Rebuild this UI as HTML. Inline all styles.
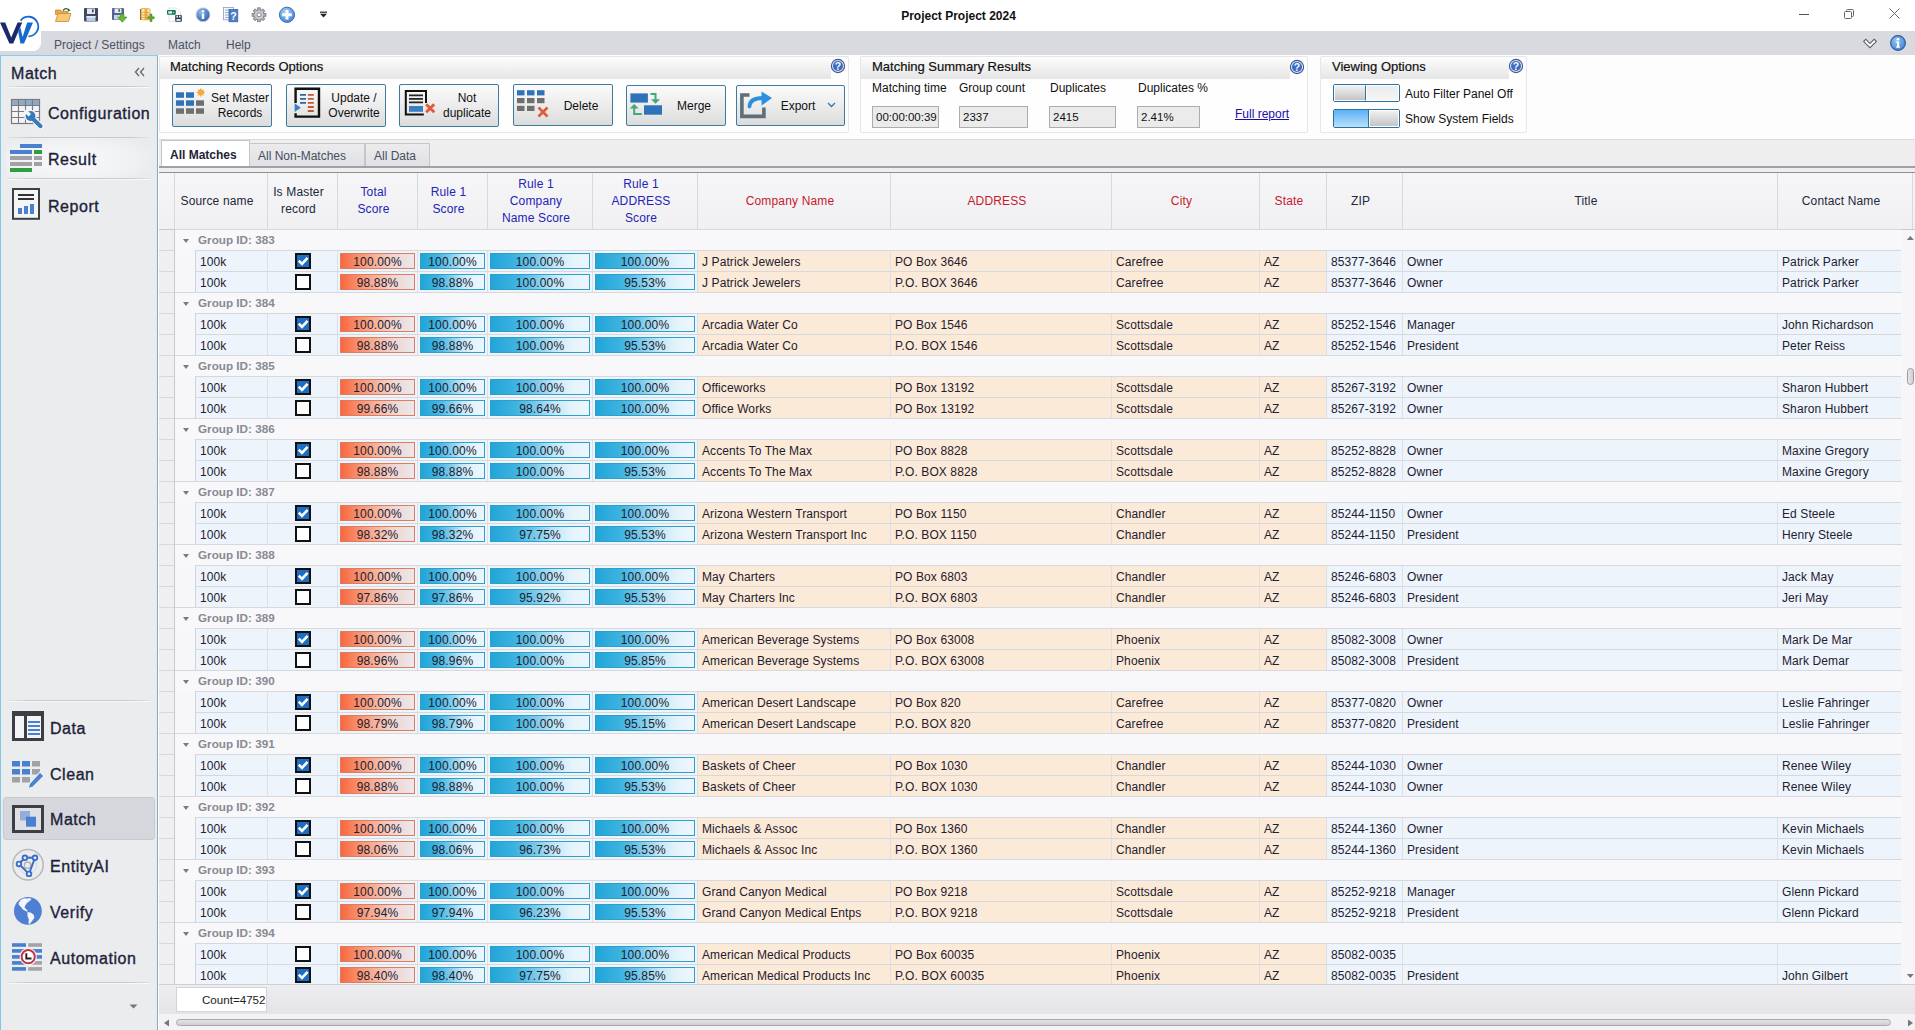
<!DOCTYPE html>
<html><head><meta charset="utf-8"><title>Project Project 2024</title>
<style>*{margin:0;padding:0;box-sizing:border-box}
html,body{width:1915px;height:1030px;overflow:hidden;background:#fff;font-family:"Liberation Sans",sans-serif;color:#1e1e2a}
.a{position:absolute}
#title{left:0;top:0;width:1915px;height:31px;background:#fff}
#ttext{left:0;width:1915px;top:9px;text-align:center;font-size:12px;font-weight:bold;color:#111;padding-left:2px}
#menubar{left:0;top:31px;width:1915px;height:24px;background:#d9dadf}
.menu{top:38px;font-size:12px;color:#4b5262}
#logo{left:0;top:0;width:41px;height:51px;background:#fff;border-bottom-right-radius:8px}
#sidebar{left:0;top:55px;width:158px;height:975px;background:#ebecee;border-left:1px solid #96bed8;border-right:1px solid #9ba7b7;border-top:1px solid #a3c3da;box-shadow:0 -1px 0 #c6def2,inset 1px 0 #d4f4fc,inset -1px 0 #d2f0fc,inset 0 1px #d4f4fc}
.sep{height:1px;background:linear-gradient(90deg,rgba(200,201,205,0.3),#c8c9cd 15%,#c8c9cd 85%,rgba(200,201,205,0.3));box-shadow:0 1px 0 #f8f8f8}
.nav{font-size:16px;color:#1d1f3a;letter-spacing:0.55px;-webkit-text-stroke:0.35px #1d1f3a}
#ribbon{left:159px;top:55px;width:1756px;height:85px;background:#fdfdfd}
.panel{top:56px;height:77px;border:1px solid #e6e7e9;border-radius:2px;background:#fefefe}
.phead{left:0;top:0;height:22px;background:linear-gradient(#fdfdfd,#e5e5e5);font-size:13px;color:#111;padding:2px 0 0 10px;-webkit-text-stroke:0.2px #111}
.btn{top:84px;height:43px;border:1px solid #3f7ba0;border-radius:2px;background:linear-gradient(#fbfbfb,#e9e9e9 60%,#dcdcdc);font-size:12px;color:#111;line-height:15px;text-align:center}
.lbl{font-size:12px;color:#111}
.box{top:106px;height:22px;border:1px solid #adadad;background:#ebebeb;font-size:11.5px;color:#111;padding:4px 0 0 3px}
#band{left:159px;top:139px;width:1756px;height:34px;background:#eeeeee;border-top:1px solid #dadada}
.tab{top:143px;height:24px;border:1px solid #c6c6c6;border-bottom:none;background:linear-gradient(#ececee,#dfe0e4);font-size:12px;color:#474d5c;padding:5px 0 0 8px}
#tabline{left:159px;top:166px;width:1756px;height:2px;background:#a09fab}
#grid{left:159px;top:172px;width:1756px;height:812px;background:#f7f7f9;border-top:1px solid #8f8f8f;overflow:hidden}
#hdr{left:0;top:0;width:1756px;height:57px;background:linear-gradient(#f6f6f8,#f0f0f3);border-bottom:1px solid #c8c9cc}
.hc{top:0;height:56px;border-left:1px solid #d8d9dc;font-size:12px;line-height:17px;text-align:center;display:flex;align-items:center;justify-content:center;color:#232838;padding-right:8px;letter-spacing:0.15px}
.hb{color:#2323b4}
.hr{color:#c51a2c}
#indcol{left:0;top:57px;width:16px;height:760px;background:#efeff1;border-right:1px solid #c9c9cc}
.grp{position:absolute;left:175px;width:1727px;height:22px;border-top:1px solid #d6d8dc;background:#f8f8fa}
.garr{position:absolute;left:8px;top:9px;width:0;height:0;border-left:3.5px solid transparent;border-right:3.5px solid transparent;border-top:4px solid #7b7b7b}
.gtxt{position:absolute;left:23px;top:3px;font-size:11.7px;font-weight:bold;color:#878a93;line-height:13px}
.ind{position:absolute;left:159px;width:15px;height:43px;border-top:1px solid #d6d8dc;border-bottom:1px solid #d6d8dc;background:linear-gradient(transparent 20px,#d6d8dc 20px,#d6d8dc 21px,transparent 21px)}
.row{position:absolute;left:195px;width:1706px;height:22px;border-top:1px solid #d6d8dc;border-bottom:1px solid #d6d8dc}
.c{position:absolute;top:0;height:20px;font-size:12px;line-height:20px;padding-top:1px;padding-left:4px;letter-spacing:0.1px;white-space:nowrap;border-left:1px solid #dcdfe4;color:#1e2030}
.blue{background:#eef4fb}
.pe{background:#fbead7}
.src{background:#eef4fb;border-left:1px solid #d0d3d8}
.cb{position:absolute;left:27px;top:2px;width:16px;height:16px;border:2px solid #111;background:#fff}
.cb.on{background:#1b6ec2}
.bar{position:absolute;left:2px;top:2px;right:2px;height:16px;line-height:16px;letter-spacing:0.15px;text-align:center;font-size:12px;color:#1d2030;padding-left:0}
.bar.or{border:1px solid #de7d5e;background:linear-gradient(90deg,#f8673f,#f88a66 20%,#f6b39c 48%,#efd5d1 70%,#ece7eb)}
.bar.bl{border:1px solid #2c9fcb;background:linear-gradient(90deg,#21a5d8,#3db3e0 25%,#78c9ea 45%,#c3e7f5 65%,#e4f3fb 82%,#edf5fc)}
#footer{left:159px;top:984px;width:1756px;height:30px;background:linear-gradient(#ededef,#e4e4e7);border-top:1px solid #cdd0d5}
.bt{text-align:center;font-size:12px;line-height:15px;color:#111}
.tog{width:67px;height:18px;border:1px solid #2f7199;border-radius:2px;overflow:hidden;background:#eee}
.cb svg{position:absolute;left:0;top:0}
</style></head>
<body>
<div id="title" class="a"></div>
<div id="ttext" class="a">Project Project 2024</div>
<div id="menubar" class="a"></div>
<div id="logo" class="a"></div>
<svg class="a" style="left:0;top:0" width="42" height="50" viewBox="0 0 42 50">
 <polygon points="0,22.5 5.2,22.5 11.2,37.5 17.6,22.5 22.2,22.5 13.2,43.5 9.4,43.5" fill="#1c2a6b"/>
 <polygon points="18.2,31.5 20.4,27.2 22.6,37 27.2,22.5 33,22.5 24,43.5 20.4,43.5" fill="#1769d2"/>
 <path d="M20.6,20.6 A9.8,9.8 0 1 1 28.5,36.3" fill="none" stroke="#1769d2" stroke-width="1.8"/>
</svg>
<!-- toolbar icons -->
<svg class="a" style="left:50px;top:3px" width="290" height="24" viewBox="50 3 290 24">
 <!-- open folder -->
 <path d="M55.5,10 h5 l1.5,1.5 h6 v3 h-12.5z" fill="#e7a94c" stroke="#c98a30" stroke-width="0.8"/>
 <path d="M55.5,21.5 l2.5,-8 h13 l-2.5,8z" fill="#f6c878" stroke="#c98a30" stroke-width="0.8"/>
 <path d="M63,10.5 q3,-3.5 6,-0.5" fill="none" stroke="#1e6a2a" stroke-width="1.3"/>
 <path d="M68,8.6 l2.6,1.8 l-2.8,1.2z" fill="#1e6a2a"/>
 <!-- save -->
 <rect x="84" y="8" width="14" height="13.6" rx="1" fill="#3d4a5f"/>
 <rect x="87" y="8.5" width="8" height="5.5" fill="#e8e8f0"/>
 <rect x="92" y="9.3" width="1.6" height="3" fill="#3d4a5f"/>
 <rect x="86.5" y="16" width="9" height="5" fill="#b9cce6"/>
 <rect x="86.5" y="16" width="9" height="1.5" fill="#e6edf7"/>
 <!-- save with arrow -->
 <rect x="112" y="8" width="12" height="12" rx="1" fill="#55648a"/>
 <rect x="114.5" y="8.5" width="7" height="4.5" fill="#e8e8f0"/>
 <rect x="118.5" y="9.2" width="1.4" height="2.6" fill="#3d4a5f"/>
 <rect x="114" y="15" width="7" height="4.5" fill="#c9d6ea"/>
 <path d="M120.5,14 h3.5 v3 h3 l-4.7,5.3 l-4.7,-5.3 h3z" fill="#6fb733" stroke="#3f8a1a" stroke-width="0.6"/>
 <!-- database -->
 <rect x="140.5" y="8.5" width="9.6" height="11.4" rx="1.5" fill="#fbe7a8" stroke="#e0a94e" stroke-width="0.8"/>
 <rect x="140" y="9" width="1.3" height="11" fill="#9a6a2a"/>
 <rect x="144.5" y="9" width="3" height="11" fill="#e8a63c" opacity="0.85"/>
 <path d="M141.5,12.5 h8 M141.5,15 h8 M141.5,17.5 h8" stroke="#d9983a" stroke-width="0.7"/>
 <path d="M150,14 h2 v2.8 h2.2 v2 h-2.2 v2.8 h-2 v-2.8 h-2.2 v-2 h2.2z" fill="#6aa532" stroke="#3f7a1a" stroke-width="0.5"/>
 <!-- table lock -->
 <path d="M169,8 h7.5 l4,4 v9.8 h-11.5z" fill="#fbfcfe" stroke="#c9d0da" stroke-width="0.6"/>
 <rect x="167" y="10.1" width="8.8" height="4.7" rx="1" fill="#137a50"/>
 <rect x="168.3" y="11.2" width="3.8" height="2.4" fill="#dff5ea"/>
 <rect x="173.2" y="12" width="1" height="1" fill="#dff5ea"/>
 <rect x="175.2" y="15" width="6.6" height="6.8" rx="0.8" fill="#2f3a4c"/>
 <rect x="176.4" y="15.6" width="1.6" height="2" fill="#e6ebf5"/><rect x="179" y="15.6" width="1.6" height="2" fill="#e6ebf5"/>
 <rect x="176.4" y="19" width="4.2" height="2" fill="#cfe0f5"/>
 <!-- info -->
 <defs><radialGradient id="tg1" cx="0.35" cy="0.3" r="0.75"><stop offset="0" stop-color="#8db8ec"/><stop offset="1" stop-color="#2f62b2"/></radialGradient><radialGradient id="tg2" cx="0.4" cy="0.3" r="0.75"><stop offset="0" stop-color="#a6cdf5"/><stop offset="1" stop-color="#3f82d2"/></radialGradient></defs>
 <circle cx="203" cy="14.8" r="6.9" fill="url(#tg1)" stroke="#b4c8e6" stroke-width="0.9"/>
 <circle cx="203" cy="11.3" r="1.3" fill="#fff"/>
 <rect x="201.8" y="13.5" width="2.4" height="5.5" fill="#fff"/>
 <!-- help doc -->
 <rect x="223.5" y="7.5" width="10" height="12.3" fill="#f6f7fa" stroke="#8ea0bc" stroke-width="0.8"/>
 <path d="M225,10 h6 M225,12.5 h6 M225,15 h6 M225,17.5 h6" stroke="#8ea0bc" stroke-width="0.8"/>
 <rect x="229" y="9.5" width="8.8" height="12.3" fill="#4a7fc6" stroke="#2f60a8" stroke-width="0.7"/>
 <text x="233.4" y="19.6" font-family="Liberation Sans" font-size="10.5" font-weight="bold" fill="#fff" text-anchor="middle">?</text>
 <!-- gear -->
 <g transform="translate(259,14.8)">
  <circle r="5.2" fill="#a4a7ae" stroke="#6e7179" stroke-width="0.8"/>
  <g fill="#a4a7ae" stroke="#6e7179" stroke-width="0.6">
   <rect x="-1.5" y="-7" width="3" height="3"/><rect x="-1.5" y="4" width="3" height="3"/>
   <rect x="-7" y="-1.5" width="3" height="3"/><rect x="4" y="-1.5" width="3" height="3"/>
   <rect x="-1.5" y="-7" width="3" height="3" transform="rotate(45)"/><rect x="-1.5" y="4" width="3" height="3" transform="rotate(45)"/>
   <rect x="-7" y="-1.5" width="3" height="3" transform="rotate(45)"/><rect x="4" y="-1.5" width="3" height="3" transform="rotate(45)"/>
  </g>
  <circle r="4.6" fill="#c9cbd0"/>
  <circle r="2" fill="#fff" stroke="#6e7179" stroke-width="0.8"/>
 </g>
 <!-- plus -->
 <circle cx="287" cy="14.8" r="7.6" fill="url(#tg2)" stroke="#3a6fb8" stroke-width="1"/>
 <path d="M285.5,10 h3 v3.3 h3.3 v3 h-3.3 v3.3 h-3 v-3.3 h-3.3 v-3 h3.3z" fill="#fff"/>
 <!-- dropdown -->
 <rect x="320" y="11.6" width="7" height="1.2" fill="#222"/>
 <path d="M320,13.8 h7 l-3.5,3.8z" fill="#222"/>
</svg>
<div class="a menu" style="left:54px">Project / Settings</div>
<div class="a menu" style="left:168px">Match</div>
<div class="a menu" style="left:226px">Help</div>
<!-- window controls -->
<div class="a" style="left:1799px;top:14px;width:10px;height:1px;background:#555"></div>
<svg class="a" style="left:1843px;top:8px" width="12" height="12" viewBox="0 0 12 12"><rect x="1.5" y="3.5" width="7" height="7" rx="1" fill="none" stroke="#666" stroke-width="1"/><path d="M3.5,3.5 v-1 a1,1 0 0 1 1,-1 h5 a1,1 0 0 1 1,1 v5 a1,1 0 0 1 -1,1 h-1" fill="none" stroke="#666" stroke-width="1"/></svg>
<svg class="a" style="left:1889px;top:8px" width="12" height="12" viewBox="0 0 12 12"><path d="M0.5,0.5 L10.5,10.5 M10.5,0.5 L0.5,10.5" stroke="#666" stroke-width="1"/></svg>
<svg class="a" style="left:1863px;top:38px" width="14" height="12" viewBox="0 0 14 12"><path d="M2.8,3.4 L7,7.6 L11.2,3.4" fill="none" stroke="#5a5a5e" stroke-width="4" stroke-linecap="square"/><path d="M2.8,3.4 L7,7.6 L11.2,3.4" fill="none" stroke="#fdfdfd" stroke-width="2" stroke-linecap="square"/></svg>
<svg class="a" style="left:1889px;top:34px" width="18" height="18" viewBox="0 0 18 18"><defs><radialGradient id="ig" cx="0.4" cy="0.35" r="0.7"><stop offset="0" stop-color="#9cc8f4"/><stop offset="1" stop-color="#3f7fcf"/></radialGradient></defs><circle cx="9" cy="9" r="7.4" fill="url(#ig)" stroke="#2a5c9e" stroke-width="1.1"/><circle cx="9" cy="5.3" r="1.3" fill="#fff"/><path d="M7.3,7.5 h2.8 v5 h1 v1.3 h-4 v-1.3 h1 v-3.7 h-0.8z" fill="#fff"/></svg>

<div id="sidebar" class="a"></div>
<div class="a nav" style="left:11px;top:65px;font-size:16px">Match</div>
<svg class="a" style="left:134px;top:67px" width="12" height="10" viewBox="0 0 12 10"><path d="M5,1 L1.5,5 L5,9 M10,1 L6.5,5 L10,9" fill="none" stroke="#666" stroke-width="1.3"/></svg>
<div class="a sep" style="left:8px;top:86px;width:142px"></div>
<svg class="a" style="left:10px;top:98px" width="34" height="32" viewBox="10 98 34 32">
 <rect x="11.5" y="99.5" width="28" height="24" fill="#f4f4f6" stroke="#7a7a7e" stroke-width="1.2"/>
 <rect x="12" y="100" width="27" height="5.5" fill="#8fa9c6"/>
 <path d="M18.5,99.5 v24 M25.5,99.5 v24 M32.5,99.5 v24 M11.5,105.5 h28 M11.5,111.5 h28 M11.5,117.5 h28" stroke="#7a7a7e" stroke-width="1.1" fill="none"/>
 <path d="M32,118 L40.6,126.2" stroke="#f4f8fc" stroke-width="6.4" stroke-linecap="round"/>
 <circle cx="30.5" cy="116" r="6.3" fill="#f4f8fc"/>
 <circle cx="30.5" cy="116" r="4.9" fill="#3a78bc"/>
 <path d="M32,118 L40.6,126.2" stroke="#3a78bc" stroke-width="4" stroke-linecap="round"/>
 <rect x="-1.7" y="-3.4" width="3.4" height="6.8" fill="#f4f8fc" transform="translate(27.4,112.9) rotate(-45)"/>
</svg>
<div class="a nav" style="left:48px;top:105px">Configuration</div>
<div class="a sep" style="left:8px;top:137px;width:142px"></div>

<div class="a" style="left:6px;top:138px;width:146px;height:40px;background:radial-gradient(ellipse 60% 70% at 45% 55%,#fafafb,#f0f1f3 70%,#eaebee)"></div>
<svg class="a" style="left:10px;top:143px" width="34" height="30" viewBox="10 143 34 30">
 <rect x="20" y="144" width="22" height="4" fill="#4a80d0"/>
 <rect x="10" y="150" width="22" height="4" fill="#4a80d0"/><rect x="34" y="150" width="8" height="4" fill="#2f9e3f"/>
 <rect x="10" y="156" width="22" height="4" fill="#a2a2a6"/><rect x="34" y="156" width="8" height="4" fill="#a2a2a6"/>
 <rect x="10" y="162" width="22" height="4" fill="#a2a2a6"/><rect x="34" y="162" width="8" height="4" fill="#a2a2a6"/>
 <rect x="10" y="168" width="22" height="4" fill="#2f9e3f"/>
</svg>
<div class="a nav" style="left:48px;top:151px">Result</div>
<div class="a sep" style="left:8px;top:178px;width:142px"></div>
<svg class="a" style="left:10px;top:186px" width="34" height="36" viewBox="10 186 34 36">
 <rect x="13" y="189" width="26" height="29.8" fill="#f4f5f7" stroke="#3e3e44" stroke-width="2"/>
 <rect x="18" y="194" width="16" height="2" fill="#333"/><rect x="18" y="198" width="16" height="2" fill="#333"/>
 <rect x="18" y="208" width="4" height="6" fill="#4a80d0"/><rect x="24" y="206" width="4" height="8" fill="#4a80d0"/><rect x="30" y="204" width="4" height="10" fill="#4a80d0"/>
</svg>
<div class="a nav" style="left:48px;top:198px">Report</div>
<div class="a sep" style="left:8px;top:700px;width:142px"></div>
<svg class="a" style="left:10px;top:709px" width="36" height="34" viewBox="10 709 36 34">
 <rect x="13.5" y="712.5" width="29" height="27" fill="#f4f4f6" stroke="#3d3d45" stroke-width="3"/>
 <rect x="12" y="711" width="32" height="5" fill="#3d3d45"/>
 <rect x="24" y="712" width="3" height="28" fill="#3d3d45"/>
 <rect x="28" y="721" width="12" height="2" fill="#4a80d0"/><rect x="28" y="725" width="12" height="2" fill="#4a80d0"/><rect x="28" y="729" width="12" height="2" fill="#4a80d0"/><rect x="28" y="733" width="12" height="2" fill="#4a80d0"/>
</svg>
<div class="a nav" style="left:50px;top:720px">Data</div>
<svg class="a" style="left:10px;top:759px" width="36" height="32" viewBox="10 759 36 32">
 <rect x="12" y="761" width="8" height="5.5" fill="#4a80d0"/><rect x="22" y="761" width="8" height="5.5" fill="#4a80d0"/><rect x="32" y="761" width="8" height="5.5" fill="#a2a2a6"/>
 <rect x="12" y="769" width="8" height="5.5" fill="#4a80d0"/><rect x="22" y="769" width="8" height="5.5" fill="#4a80d0"/><rect x="32" y="769" width="8" height="5.5" fill="#a2a2a6"/>
 <rect x="12" y="777" width="8" height="5.5" fill="#a2a2a6"/><rect x="22" y="777" width="8" height="5.5" fill="#a2a2a6"/>
 <path d="M40,772 l4,4 l-11,11 l-5,1.5 l1.5,-5z" fill="#4a80d0" stroke="#eceef0" stroke-width="1.2"/>
</svg>
<div class="a nav" style="left:50px;top:766px">Clean</div>
<div class="a" style="left:3px;top:797px;width:152px;height:43px;background:#d6d7dc;border:1px solid #c9cacf;border-radius:3px"></div>
<svg class="a" style="left:10px;top:803px" width="36" height="32" viewBox="10 803 36 32">
 <rect x="13.5" y="806.5" width="29" height="25" fill="#dfe0e4" stroke="#3d3d45" stroke-width="3"/>
 <rect x="20" y="811" width="10" height="9.5" fill="#93acd8"/>
 <rect x="26" y="816.7" width="10" height="10" fill="#4a80d0"/>
</svg>
<div class="a nav" style="left:50px;top:811px">Match</div>
<svg class="a" style="left:10px;top:847px" width="36" height="36" viewBox="10 847 36 36">
 <circle cx="28" cy="864.7" r="15.2" fill="none" stroke="#b6b8bc" stroke-width="1.5"/>
 <circle cx="27.8" cy="865" r="9" fill="none" stroke="#d8d9dc" stroke-width="1"/>
 <circle cx="27.6" cy="865.2" r="3.2" fill="none" stroke="#b0b1b5" stroke-width="1.4"/>
 <path d="M18.9,864 L24.9,857.8 L35,857.8 L29,873.9 Z" fill="none" stroke="#3a6cc8" stroke-width="1.9" stroke-linejoin="round"/>
 <g fill="#e6f2fc" stroke="#3a6cc8" stroke-width="1.8"><circle cx="18.9" cy="864" r="2.3"/><circle cx="24.9" cy="857.8" r="2.3"/><circle cx="35" cy="857.8" r="2.3"/><circle cx="29" cy="873.9" r="2.3"/></g>
</svg>
<div class="a nav" style="left:50px;top:858px">EntityAI</div>
<svg class="a" style="left:12px;top:895px" width="32" height="32" viewBox="12 895 32 32">
 <circle cx="27.9" cy="910.9" r="13.9" fill="#4f7fd2"/>
 <path d="M18.4,903.8 L20.5,900 L24,898.2 L27.5,898.5 L30,898 L31.5,899.5 L29,901.5 L27,903 L25.5,905 L24.5,907.5 L26.5,909.5 L28,911.2 L26.5,911.5 L23,909.5 L21,907 L19.5,905.5 Z" fill="#f3f5fa"/>
 <path d="M27.5,912 L30.5,912.5 L33.5,914.5 L34.5,917.5 L32.5,920.5 L30.5,923 L29.5,924.5 L28.5,923 L28.8,919.5 L27.5,916 Z" fill="#f3f5fa"/>
</svg>
<div class="a nav" style="left:50px;top:904px">Verify</div>
<svg class="a" style="left:10px;top:941px" width="36" height="32" viewBox="10 941 36 32">
 <rect x="12" y="943.2" width="14" height="3.6" fill="#4a7fcf"/><rect x="28.2" y="943.2" width="13.8" height="3.6" fill="#a4a4a8"/>
 <rect x="12" y="949.1" width="14" height="3.6" fill="#4a7fcf"/><rect x="28.2" y="949.1" width="13.8" height="3.6" fill="#4a7fcf"/>
 <rect x="12" y="955.1" width="14" height="3.6" fill="#4a7fcf"/><rect x="28.2" y="955.1" width="13.8" height="3.6" fill="#4a7fcf"/>
 <rect x="12" y="961.1" width="14" height="3.6" fill="#4a7fcf"/><rect x="28.2" y="961.1" width="13.8" height="3.6" fill="#a4a4a8"/>
 <rect x="12" y="967.1" width="14" height="3.6" fill="#4a7fcf"/><rect x="28.2" y="967.1" width="13.8" height="3.6" fill="#a4a4a8"/>
 <circle cx="28.2" cy="956.7" r="8.6" fill="#fff"/>
 <circle cx="28.2" cy="956.7" r="6.6" fill="#fff" stroke="#cc303c" stroke-width="2"/>
 <path d="M26.3,953.3 v5.2 h5.2" fill="none" stroke="#222" stroke-width="1.9"/>
</svg>
<div class="a nav" style="left:50px;top:950px">Automation</div>
<div class="a sep" style="left:8px;top:982px;width:142px"></div>
<svg class="a" style="left:129px;top:1004px" width="9" height="5" viewBox="0 0 9 5"><path d="M0.5,0.5 h8 l-4,4z" fill="#777"/></svg>

<div id="ribbon" class="a"></div>
<div class="a panel" style="left:159px;width:690px"><div class="a phead" style="width:671px">Matching Records Options</div></div>
<svg class="a help" style="left:830px;top:58px" width="16" height="16" viewBox="0 0 16 16"><circle cx="8" cy="8" r="6.6" fill="#d8e6fb" stroke="#46568a" stroke-width="1.1"/><circle cx="8" cy="8" r="5" fill="#3c6cbe"/><text x="8" y="11.9" font-family="Liberation Sans" font-size="10.5" font-weight="bold" fill="#f0faff" text-anchor="middle">?</text></svg>
<div class="a btn" style="left:172px;width:100px">
 <svg class="a" style="left:2px;top:1px" width="30" height="30" viewBox="175 87 30 30">
  <rect x="176" y="93.3" width="8" height="5.5" fill="#2e73b8"/><rect x="186" y="93.3" width="8" height="5.5" fill="#2e73b8"/>
  <rect x="176" y="101.3" width="8" height="5.5" fill="#2e73b8"/><rect x="186" y="101.3" width="8" height="5.5" fill="#2e73b8"/><rect x="196" y="101.3" width="8" height="5.5" fill="#6f6f70"/>
  <rect x="176" y="109.3" width="8" height="5.5" fill="#6f6f70"/><rect x="186" y="109.3" width="8" height="5.5" fill="#6f6f70"/><rect x="196" y="109.3" width="8" height="5.5" fill="#6f6f70"/>
  <g transform="translate(200.8,93.6)" fill="#f5aa3c"><circle r="3"/><path d="M0,-5 L1,-2 L3.5,-3.5 L2,-1 L5,0 L2,1 L3.5,3.5 L1,2 L0,5 L-1,2 L-3.5,3.5 L-2,1 L-5,0 L-2,-1 L-3.5,-3.5 L-1,-2z"/></g>
 </svg>
 <div class="a bt" style="left:29px;top:6px;width:76px">Set Master<br>Records</div>
</div>
<div class="a btn" style="left:286px;width:100px">
 <svg class="a" style="left:5px;top:1px" width="30" height="36" viewBox="292 87 30 36">
  <path d="M295.6,104 v-14.2 h23.4 v27.8 h-23.4 v-3.4" fill="none" stroke="#111" stroke-width="2.4"/>
  <path d="M294.6,104.3 l6.2,4.4 l-6.2,4.4z" fill="#3a7fc4"/>
  <path d="M300,95.8 h6 M300,99.8 h6 M300,103.9 h6" stroke="#3264a8" stroke-width="1.8"/>
  <path d="M307.8,95.8 h6 M307.8,99.8 h6 M307.8,103.9 h6 M307.8,108 h6 M307.8,112 h6" stroke="#c2573a" stroke-width="1.8"/>
 </svg>
 <div class="a bt" style="left:37px;top:6px;width:60px">Update /<br>Overwrite</div>
</div>
<div class="a btn" style="left:399px;width:100px">
 <svg class="a" style="left:3px;top:3px" width="36" height="30" viewBox="403 89 36 30">
  <path d="M426,104 v-12 h-20.2 v23.6 h18" fill="none" stroke="#111" stroke-width="2"/>
  <path d="M409,96.4 h14 M409,99.8 h14 M409,103.3 h14" stroke="#222" stroke-width="1.7"/>
  <rect x="409" y="107" width="14" height="5.8" fill="#3a7fc4"/>
  <path d="M426.2,105.2 l8,8 M434.2,105.2 l-8,8" stroke="#e2583a" stroke-width="2.8"/>
 </svg>
 <div class="a bt" style="left:38px;top:6px;width:58px">Not<br>duplicate</div>
</div>
<div class="a btn" style="left:513px;width:100px;height:42px">
 <svg class="a" style="left:2px;top:3px" width="36" height="32" viewBox="516 89 36 32">
  <rect x="517" y="91.2" width="7.5" height="5.2" fill="#2e73b8"/><rect x="527" y="91.2" width="7.5" height="5.2" fill="#2e73b8"/><rect x="537" y="91.2" width="7.5" height="5.2" fill="#2e73b8"/>
  <rect x="517" y="99" width="7.5" height="5.2" fill="#6f6f70"/><rect x="527" y="99" width="7.5" height="5.2" fill="#6f6f70"/><rect x="537" y="99" width="7.5" height="5.2" fill="#6f6f70"/>
  <rect x="517" y="106.8" width="7.5" height="5.2" fill="#6f6f70"/><rect x="527" y="106.8" width="7.5" height="5.2" fill="#6f6f70"/>
  <path d="M538.5,108.5 l9,9 M547.5,108.5 l-9,9" stroke="#e2583a" stroke-width="2.6"/>
 </svg>
 <div class="a bt" style="left:39px;top:14px;width:56px">Delete</div>
</div>
<div class="a btn" style="left:626px;top:85px;width:100px;height:41px">
 <svg class="a" style="left:2px;top:3px" width="38" height="32" viewBox="629 89 38 32">
  <rect x="630.4" y="93.4" width="17.5" height="9.2" fill="#2e73b8"/>
  <rect x="644" y="105.3" width="18" height="9.4" fill="#2e73b8"/>
  <path d="M650.5,94 h5 v6" fill="none" stroke="#45a877" stroke-width="2"/><path d="M651,99.2 h9 l-4.5,4.5z" fill="#45a877"/>
  <path d="M641.8,114 h-7.6 v-6" fill="none" stroke="#45a877" stroke-width="2"/><path d="M629.7,108.6 h9 l-4.5,-4.5z" fill="#45a877"/>
 </svg>
 <div class="a bt" style="left:41px;top:13px;width:52px">Merge</div>
</div>
<div class="a btn" style="left:736px;top:85px;width:109px;height:41px">
 <svg class="a" style="left:2px;top:3px" width="38" height="32" viewBox="739 89 38 32">
  <path d="M749.5,95 h-7.6 v21.4 h22 v-9" fill="none" stroke="#5f6e7b" stroke-width="3.6"/>
  <path d="M749.5,106.5 q0.5,-8.5 13,-8.5" fill="none" stroke="#2d8fe0" stroke-width="3.8" stroke-linecap="round"/>
  <path d="M761.5,91.4 l10.5,6.6 l-10.5,7.6z" fill="#2d8fe0"/>
 </svg>
 <div class="a bt" style="left:39px;top:13px;width:44px">Export</div>
 <svg class="a" style="left:90px;top:16px" width="9" height="6" viewBox="0 0 9 6"><path d="M1,1 L4.5,4.5 L8,1" fill="none" stroke="#3570b8" stroke-width="1.3"/></svg>
</div>

<div class="a panel" style="left:860px;width:448px"><div class="a phead" style="width:429px;padding-left:11px">Matching Summary Results</div></div>
<svg class="a help" style="left:1289px;top:59px" width="16" height="16" viewBox="0 0 16 16"><circle cx="8" cy="8" r="6.6" fill="#d8e6fb" stroke="#46568a" stroke-width="1.1"/><circle cx="8" cy="8" r="5" fill="#3c6cbe"/><text x="8" y="11.9" font-family="Liberation Sans" font-size="10.5" font-weight="bold" fill="#f0faff" text-anchor="middle">?</text></svg>
<div class="a lbl" style="left:872px;top:81px">Matching time</div>
<div class="a lbl" style="left:959px;top:81px">Group count</div>
<div class="a lbl" style="left:1050px;top:81px">Duplicates</div>
<div class="a lbl" style="left:1138px;top:81px">Duplicates %</div>
<div class="a box" style="left:872px;width:67px">00:00:00:39</div>
<div class="a box" style="left:959px;width:69px">2337</div>
<div class="a box" style="left:1049px;width:67px">2415</div>
<div class="a box" style="left:1137px;width:63px">2.41%</div>
<div class="a lbl" style="left:1235px;top:107px;color:#1a0dab;text-decoration:underline">Full report</div>

<div class="a panel" style="left:1320px;width:207px"><div class="a phead" style="width:188px;padding-left:11px">Viewing Options</div></div>
<svg class="a help" style="left:1508px;top:58px" width="16" height="16" viewBox="0 0 16 16"><circle cx="8" cy="8" r="6.6" fill="#d8e6fb" stroke="#46568a" stroke-width="1.1"/><circle cx="8" cy="8" r="5" fill="#3c6cbe"/><text x="8" y="11.9" font-family="Liberation Sans" font-size="10.5" font-weight="bold" fill="#f0faff" text-anchor="middle">?</text></svg>
<div class="a tog" style="left:1333px;top:84px"><div class="a" style="left:0;top:0;width:32px;height:16px;background:linear-gradient(#f0f0f0,#c6c4c4);border:1px solid #f4fcff;border-right:1px solid #2f7199"></div><div class="a" style="left:32px;top:0;width:33px;height:16px;background:linear-gradient(#ececec,#f6f4f4);border:1px solid #fff"></div></div>
<div class="a tog" style="left:1333px;top:109px;height:19px"><div class="a" style="left:0;top:0;width:35px;height:17px;background:linear-gradient(#5ab2f4,#b9e1fc);border-right:1px solid #2f7199"></div><div class="a" style="left:35px;top:0;width:30px;height:17px;background:linear-gradient(#f0f0f0,#c6c4c4);border:1px solid #fff"></div></div>
<div class="a lbl" style="left:1405px;top:87px">Auto Filter Panel Off</div>
<div class="a lbl" style="left:1405px;top:112px">Show System Fields</div>

<div id="band" class="a"></div>
<div class="a tab" style="left:161px;top:140px;height:27px;width:89px;background:#fff;font-weight:bold;color:#1e2338;padding-top:7px">All Matches</div>
<div class="a tab" style="left:249px;width:116px">All Non-Matches</div>
<div class="a tab" style="left:365px;width:65px">All Data</div>
<div id="tabline" class="a"></div>

<div id="grid" class="a">
 <div id="hdr" class="a"></div>
 <div id="indcol" class="a"></div>
 <div class="a hc" style="left:15px;width:93px">Source name</div>
 <div class="a hc" style="left:108px;width:70px">Is Master<br>record</div>
 <div class="a hc hb" style="left:178px;width:80px">Total<br>Score</div>
 <div class="a hc hb" style="left:258px;width:70px">Rule 1<br>Score</div>
 <div class="a hc hb" style="left:328px;width:105px">Rule 1<br>Company<br>Name Score</div>
 <div class="a hc hb" style="left:433px;width:105px">Rule 1<br>ADDRESS<br>Score</div>
 <div class="a hc hr" style="left:538px;width:193px">Company Name</div>
 <div class="a hc hr" style="left:731px;width:221px">ADDRESS</div>
 <div class="a hc hr" style="left:952px;width:148px">City</div>
 <div class="a hc hr" style="left:1100px;width:67px">State</div>
 <div class="a hc" style="left:1167px;width:76px">ZIP</div>
 <div class="a hc" style="left:1243px;width:375px">Title</div>
 <div class="a hc" style="left:1618px;width:136px;border-right:1px solid #d8d9dc">Contact Name</div>
 <div id="rows" class="a" style="left:-159px;top:-173px">
<div class="grp" style="top:229px"><span class="garr"></span><span class="gtxt">Group ID: 383</span></div>
<div class="ind" style="top:250px"></div>
<div class="row" style="top:250px"><div class="c src" style="left:0px;width:72px">100k</div><div class="c blue" style="left:72px;width:70px"><span class="cb on"><svg width="12" height="12" viewBox="0 0 12 12"><path d="M1.8,5.6 L5,8.9 L10.6,2.8" fill="none" stroke="#fff" stroke-width="2.6"/></svg></span></div><div class="c blue" style="left:142px;width:80px"><div class="bar or">100.00%</div></div><div class="c blue" style="left:222px;width:70px"><div class="bar bl">100.00%</div></div><div class="c blue" style="left:292px;width:105px"><div class="bar bl">100.00%</div></div><div class="c blue" style="left:397px;width:105px"><div class="bar bl">100.00%</div></div><div class="c pe" style="left:502px;width:193px">J Patrick Jewelers</div><div class="c pe" style="left:695px;width:221px">PO Box 3646</div><div class="c pe" style="left:916px;width:148px">Carefree</div><div class="c pe" style="left:1064px;width:67px">AZ</div><div class="c blue" style="left:1131px;width:76px">85377-3646</div><div class="c blue" style="left:1207px;width:375px">Owner</div><div class="c blue last" style="left:1582px;width:124px">Patrick Parker</div></div>
<div class="row" style="top:271px"><div class="c src" style="left:0px;width:72px">100k</div><div class="c blue" style="left:72px;width:70px"><span class="cb"></span></div><div class="c blue" style="left:142px;width:80px"><div class="bar or">98.88%</div></div><div class="c blue" style="left:222px;width:70px"><div class="bar bl">98.88%</div></div><div class="c blue" style="left:292px;width:105px"><div class="bar bl">100.00%</div></div><div class="c blue" style="left:397px;width:105px"><div class="bar bl">95.53%</div></div><div class="c pe" style="left:502px;width:193px">J Patrick Jewelers</div><div class="c pe" style="left:695px;width:221px">P.O. BOX 3646</div><div class="c pe" style="left:916px;width:148px">Carefree</div><div class="c pe" style="left:1064px;width:67px">AZ</div><div class="c blue" style="left:1131px;width:76px">85377-3646</div><div class="c blue" style="left:1207px;width:375px">Owner</div><div class="c blue last" style="left:1582px;width:124px">Patrick Parker</div></div>
<div class="grp" style="top:292px"><span class="garr"></span><span class="gtxt">Group ID: 384</span></div>
<div class="ind" style="top:313px"></div>
<div class="row" style="top:313px"><div class="c src" style="left:0px;width:72px">100k</div><div class="c blue" style="left:72px;width:70px"><span class="cb on"><svg width="12" height="12" viewBox="0 0 12 12"><path d="M1.8,5.6 L5,8.9 L10.6,2.8" fill="none" stroke="#fff" stroke-width="2.6"/></svg></span></div><div class="c blue" style="left:142px;width:80px"><div class="bar or">100.00%</div></div><div class="c blue" style="left:222px;width:70px"><div class="bar bl">100.00%</div></div><div class="c blue" style="left:292px;width:105px"><div class="bar bl">100.00%</div></div><div class="c blue" style="left:397px;width:105px"><div class="bar bl">100.00%</div></div><div class="c pe" style="left:502px;width:193px">Arcadia Water Co</div><div class="c pe" style="left:695px;width:221px">PO Box 1546</div><div class="c pe" style="left:916px;width:148px">Scottsdale</div><div class="c pe" style="left:1064px;width:67px">AZ</div><div class="c blue" style="left:1131px;width:76px">85252-1546</div><div class="c blue" style="left:1207px;width:375px">Manager</div><div class="c blue last" style="left:1582px;width:124px">John Richardson</div></div>
<div class="row" style="top:334px"><div class="c src" style="left:0px;width:72px">100k</div><div class="c blue" style="left:72px;width:70px"><span class="cb"></span></div><div class="c blue" style="left:142px;width:80px"><div class="bar or">98.88%</div></div><div class="c blue" style="left:222px;width:70px"><div class="bar bl">98.88%</div></div><div class="c blue" style="left:292px;width:105px"><div class="bar bl">100.00%</div></div><div class="c blue" style="left:397px;width:105px"><div class="bar bl">95.53%</div></div><div class="c pe" style="left:502px;width:193px">Arcadia Water Co</div><div class="c pe" style="left:695px;width:221px">P.O. BOX 1546</div><div class="c pe" style="left:916px;width:148px">Scottsdale</div><div class="c pe" style="left:1064px;width:67px">AZ</div><div class="c blue" style="left:1131px;width:76px">85252-1546</div><div class="c blue" style="left:1207px;width:375px">President</div><div class="c blue last" style="left:1582px;width:124px">Peter Reiss</div></div>
<div class="grp" style="top:355px"><span class="garr"></span><span class="gtxt">Group ID: 385</span></div>
<div class="ind" style="top:376px"></div>
<div class="row" style="top:376px"><div class="c src" style="left:0px;width:72px">100k</div><div class="c blue" style="left:72px;width:70px"><span class="cb on"><svg width="12" height="12" viewBox="0 0 12 12"><path d="M1.8,5.6 L5,8.9 L10.6,2.8" fill="none" stroke="#fff" stroke-width="2.6"/></svg></span></div><div class="c blue" style="left:142px;width:80px"><div class="bar or">100.00%</div></div><div class="c blue" style="left:222px;width:70px"><div class="bar bl">100.00%</div></div><div class="c blue" style="left:292px;width:105px"><div class="bar bl">100.00%</div></div><div class="c blue" style="left:397px;width:105px"><div class="bar bl">100.00%</div></div><div class="c pe" style="left:502px;width:193px">Officeworks</div><div class="c pe" style="left:695px;width:221px">PO Box 13192</div><div class="c pe" style="left:916px;width:148px">Scottsdale</div><div class="c pe" style="left:1064px;width:67px">AZ</div><div class="c blue" style="left:1131px;width:76px">85267-3192</div><div class="c blue" style="left:1207px;width:375px">Owner</div><div class="c blue last" style="left:1582px;width:124px">Sharon Hubbert</div></div>
<div class="row" style="top:397px"><div class="c src" style="left:0px;width:72px">100k</div><div class="c blue" style="left:72px;width:70px"><span class="cb"></span></div><div class="c blue" style="left:142px;width:80px"><div class="bar or">99.66%</div></div><div class="c blue" style="left:222px;width:70px"><div class="bar bl">99.66%</div></div><div class="c blue" style="left:292px;width:105px"><div class="bar bl">98.64%</div></div><div class="c blue" style="left:397px;width:105px"><div class="bar bl">100.00%</div></div><div class="c pe" style="left:502px;width:193px">Office Works</div><div class="c pe" style="left:695px;width:221px">PO Box 13192</div><div class="c pe" style="left:916px;width:148px">Scottsdale</div><div class="c pe" style="left:1064px;width:67px">AZ</div><div class="c blue" style="left:1131px;width:76px">85267-3192</div><div class="c blue" style="left:1207px;width:375px">Owner</div><div class="c blue last" style="left:1582px;width:124px">Sharon Hubbert</div></div>
<div class="grp" style="top:418px"><span class="garr"></span><span class="gtxt">Group ID: 386</span></div>
<div class="ind" style="top:439px"></div>
<div class="row" style="top:439px"><div class="c src" style="left:0px;width:72px">100k</div><div class="c blue" style="left:72px;width:70px"><span class="cb on"><svg width="12" height="12" viewBox="0 0 12 12"><path d="M1.8,5.6 L5,8.9 L10.6,2.8" fill="none" stroke="#fff" stroke-width="2.6"/></svg></span></div><div class="c blue" style="left:142px;width:80px"><div class="bar or">100.00%</div></div><div class="c blue" style="left:222px;width:70px"><div class="bar bl">100.00%</div></div><div class="c blue" style="left:292px;width:105px"><div class="bar bl">100.00%</div></div><div class="c blue" style="left:397px;width:105px"><div class="bar bl">100.00%</div></div><div class="c pe" style="left:502px;width:193px">Accents To The Max</div><div class="c pe" style="left:695px;width:221px">PO Box 8828</div><div class="c pe" style="left:916px;width:148px">Scottsdale</div><div class="c pe" style="left:1064px;width:67px">AZ</div><div class="c blue" style="left:1131px;width:76px">85252-8828</div><div class="c blue" style="left:1207px;width:375px">Owner</div><div class="c blue last" style="left:1582px;width:124px">Maxine Gregory</div></div>
<div class="row" style="top:460px"><div class="c src" style="left:0px;width:72px">100k</div><div class="c blue" style="left:72px;width:70px"><span class="cb"></span></div><div class="c blue" style="left:142px;width:80px"><div class="bar or">98.88%</div></div><div class="c blue" style="left:222px;width:70px"><div class="bar bl">98.88%</div></div><div class="c blue" style="left:292px;width:105px"><div class="bar bl">100.00%</div></div><div class="c blue" style="left:397px;width:105px"><div class="bar bl">95.53%</div></div><div class="c pe" style="left:502px;width:193px">Accents To The Max</div><div class="c pe" style="left:695px;width:221px">P.O. BOX 8828</div><div class="c pe" style="left:916px;width:148px">Scottsdale</div><div class="c pe" style="left:1064px;width:67px">AZ</div><div class="c blue" style="left:1131px;width:76px">85252-8828</div><div class="c blue" style="left:1207px;width:375px">Owner</div><div class="c blue last" style="left:1582px;width:124px">Maxine Gregory</div></div>
<div class="grp" style="top:481px"><span class="garr"></span><span class="gtxt">Group ID: 387</span></div>
<div class="ind" style="top:502px"></div>
<div class="row" style="top:502px"><div class="c src" style="left:0px;width:72px">100k</div><div class="c blue" style="left:72px;width:70px"><span class="cb on"><svg width="12" height="12" viewBox="0 0 12 12"><path d="M1.8,5.6 L5,8.9 L10.6,2.8" fill="none" stroke="#fff" stroke-width="2.6"/></svg></span></div><div class="c blue" style="left:142px;width:80px"><div class="bar or">100.00%</div></div><div class="c blue" style="left:222px;width:70px"><div class="bar bl">100.00%</div></div><div class="c blue" style="left:292px;width:105px"><div class="bar bl">100.00%</div></div><div class="c blue" style="left:397px;width:105px"><div class="bar bl">100.00%</div></div><div class="c pe" style="left:502px;width:193px">Arizona Western Transport</div><div class="c pe" style="left:695px;width:221px">PO Box 1150</div><div class="c pe" style="left:916px;width:148px">Chandler</div><div class="c pe" style="left:1064px;width:67px">AZ</div><div class="c blue" style="left:1131px;width:76px">85244-1150</div><div class="c blue" style="left:1207px;width:375px">Owner</div><div class="c blue last" style="left:1582px;width:124px">Ed Steele</div></div>
<div class="row" style="top:523px"><div class="c src" style="left:0px;width:72px">100k</div><div class="c blue" style="left:72px;width:70px"><span class="cb"></span></div><div class="c blue" style="left:142px;width:80px"><div class="bar or">98.32%</div></div><div class="c blue" style="left:222px;width:70px"><div class="bar bl">98.32%</div></div><div class="c blue" style="left:292px;width:105px"><div class="bar bl">97.75%</div></div><div class="c blue" style="left:397px;width:105px"><div class="bar bl">95.53%</div></div><div class="c pe" style="left:502px;width:193px">Arizona Western Transport Inc</div><div class="c pe" style="left:695px;width:221px">P.O. BOX 1150</div><div class="c pe" style="left:916px;width:148px">Chandler</div><div class="c pe" style="left:1064px;width:67px">AZ</div><div class="c blue" style="left:1131px;width:76px">85244-1150</div><div class="c blue" style="left:1207px;width:375px">President</div><div class="c blue last" style="left:1582px;width:124px">Henry Steele</div></div>
<div class="grp" style="top:544px"><span class="garr"></span><span class="gtxt">Group ID: 388</span></div>
<div class="ind" style="top:565px"></div>
<div class="row" style="top:565px"><div class="c src" style="left:0px;width:72px">100k</div><div class="c blue" style="left:72px;width:70px"><span class="cb on"><svg width="12" height="12" viewBox="0 0 12 12"><path d="M1.8,5.6 L5,8.9 L10.6,2.8" fill="none" stroke="#fff" stroke-width="2.6"/></svg></span></div><div class="c blue" style="left:142px;width:80px"><div class="bar or">100.00%</div></div><div class="c blue" style="left:222px;width:70px"><div class="bar bl">100.00%</div></div><div class="c blue" style="left:292px;width:105px"><div class="bar bl">100.00%</div></div><div class="c blue" style="left:397px;width:105px"><div class="bar bl">100.00%</div></div><div class="c pe" style="left:502px;width:193px">May Charters</div><div class="c pe" style="left:695px;width:221px">PO Box 6803</div><div class="c pe" style="left:916px;width:148px">Chandler</div><div class="c pe" style="left:1064px;width:67px">AZ</div><div class="c blue" style="left:1131px;width:76px">85246-6803</div><div class="c blue" style="left:1207px;width:375px">Owner</div><div class="c blue last" style="left:1582px;width:124px">Jack May</div></div>
<div class="row" style="top:586px"><div class="c src" style="left:0px;width:72px">100k</div><div class="c blue" style="left:72px;width:70px"><span class="cb"></span></div><div class="c blue" style="left:142px;width:80px"><div class="bar or">97.86%</div></div><div class="c blue" style="left:222px;width:70px"><div class="bar bl">97.86%</div></div><div class="c blue" style="left:292px;width:105px"><div class="bar bl">95.92%</div></div><div class="c blue" style="left:397px;width:105px"><div class="bar bl">95.53%</div></div><div class="c pe" style="left:502px;width:193px">May Charters Inc</div><div class="c pe" style="left:695px;width:221px">P.O. BOX 6803</div><div class="c pe" style="left:916px;width:148px">Chandler</div><div class="c pe" style="left:1064px;width:67px">AZ</div><div class="c blue" style="left:1131px;width:76px">85246-6803</div><div class="c blue" style="left:1207px;width:375px">President</div><div class="c blue last" style="left:1582px;width:124px">Jeri May</div></div>
<div class="grp" style="top:607px"><span class="garr"></span><span class="gtxt">Group ID: 389</span></div>
<div class="ind" style="top:628px"></div>
<div class="row" style="top:628px"><div class="c src" style="left:0px;width:72px">100k</div><div class="c blue" style="left:72px;width:70px"><span class="cb on"><svg width="12" height="12" viewBox="0 0 12 12"><path d="M1.8,5.6 L5,8.9 L10.6,2.8" fill="none" stroke="#fff" stroke-width="2.6"/></svg></span></div><div class="c blue" style="left:142px;width:80px"><div class="bar or">100.00%</div></div><div class="c blue" style="left:222px;width:70px"><div class="bar bl">100.00%</div></div><div class="c blue" style="left:292px;width:105px"><div class="bar bl">100.00%</div></div><div class="c blue" style="left:397px;width:105px"><div class="bar bl">100.00%</div></div><div class="c pe" style="left:502px;width:193px">American Beverage Systems</div><div class="c pe" style="left:695px;width:221px">PO Box 63008</div><div class="c pe" style="left:916px;width:148px">Phoenix</div><div class="c pe" style="left:1064px;width:67px">AZ</div><div class="c blue" style="left:1131px;width:76px">85082-3008</div><div class="c blue" style="left:1207px;width:375px">Owner</div><div class="c blue last" style="left:1582px;width:124px">Mark De Mar</div></div>
<div class="row" style="top:649px"><div class="c src" style="left:0px;width:72px">100k</div><div class="c blue" style="left:72px;width:70px"><span class="cb"></span></div><div class="c blue" style="left:142px;width:80px"><div class="bar or">98.96%</div></div><div class="c blue" style="left:222px;width:70px"><div class="bar bl">98.96%</div></div><div class="c blue" style="left:292px;width:105px"><div class="bar bl">100.00%</div></div><div class="c blue" style="left:397px;width:105px"><div class="bar bl">95.85%</div></div><div class="c pe" style="left:502px;width:193px">American Beverage Systems</div><div class="c pe" style="left:695px;width:221px">P.O. BOX 63008</div><div class="c pe" style="left:916px;width:148px">Phoenix</div><div class="c pe" style="left:1064px;width:67px">AZ</div><div class="c blue" style="left:1131px;width:76px">85082-3008</div><div class="c blue" style="left:1207px;width:375px">President</div><div class="c blue last" style="left:1582px;width:124px">Mark Demar</div></div>
<div class="grp" style="top:670px"><span class="garr"></span><span class="gtxt">Group ID: 390</span></div>
<div class="ind" style="top:691px"></div>
<div class="row" style="top:691px"><div class="c src" style="left:0px;width:72px">100k</div><div class="c blue" style="left:72px;width:70px"><span class="cb on"><svg width="12" height="12" viewBox="0 0 12 12"><path d="M1.8,5.6 L5,8.9 L10.6,2.8" fill="none" stroke="#fff" stroke-width="2.6"/></svg></span></div><div class="c blue" style="left:142px;width:80px"><div class="bar or">100.00%</div></div><div class="c blue" style="left:222px;width:70px"><div class="bar bl">100.00%</div></div><div class="c blue" style="left:292px;width:105px"><div class="bar bl">100.00%</div></div><div class="c blue" style="left:397px;width:105px"><div class="bar bl">100.00%</div></div><div class="c pe" style="left:502px;width:193px">American Desert Landscape</div><div class="c pe" style="left:695px;width:221px">PO Box 820</div><div class="c pe" style="left:916px;width:148px">Carefree</div><div class="c pe" style="left:1064px;width:67px">AZ</div><div class="c blue" style="left:1131px;width:76px">85377-0820</div><div class="c blue" style="left:1207px;width:375px">Owner</div><div class="c blue last" style="left:1582px;width:124px">Leslie Fahringer</div></div>
<div class="row" style="top:712px"><div class="c src" style="left:0px;width:72px">100k</div><div class="c blue" style="left:72px;width:70px"><span class="cb"></span></div><div class="c blue" style="left:142px;width:80px"><div class="bar or">98.79%</div></div><div class="c blue" style="left:222px;width:70px"><div class="bar bl">98.79%</div></div><div class="c blue" style="left:292px;width:105px"><div class="bar bl">100.00%</div></div><div class="c blue" style="left:397px;width:105px"><div class="bar bl">95.15%</div></div><div class="c pe" style="left:502px;width:193px">American Desert Landscape</div><div class="c pe" style="left:695px;width:221px">P.O. BOX 820</div><div class="c pe" style="left:916px;width:148px">Carefree</div><div class="c pe" style="left:1064px;width:67px">AZ</div><div class="c blue" style="left:1131px;width:76px">85377-0820</div><div class="c blue" style="left:1207px;width:375px">President</div><div class="c blue last" style="left:1582px;width:124px">Leslie Fahringer</div></div>
<div class="grp" style="top:733px"><span class="garr"></span><span class="gtxt">Group ID: 391</span></div>
<div class="ind" style="top:754px"></div>
<div class="row" style="top:754px"><div class="c src" style="left:0px;width:72px">100k</div><div class="c blue" style="left:72px;width:70px"><span class="cb on"><svg width="12" height="12" viewBox="0 0 12 12"><path d="M1.8,5.6 L5,8.9 L10.6,2.8" fill="none" stroke="#fff" stroke-width="2.6"/></svg></span></div><div class="c blue" style="left:142px;width:80px"><div class="bar or">100.00%</div></div><div class="c blue" style="left:222px;width:70px"><div class="bar bl">100.00%</div></div><div class="c blue" style="left:292px;width:105px"><div class="bar bl">100.00%</div></div><div class="c blue" style="left:397px;width:105px"><div class="bar bl">100.00%</div></div><div class="c pe" style="left:502px;width:193px">Baskets of Cheer</div><div class="c pe" style="left:695px;width:221px">PO Box 1030</div><div class="c pe" style="left:916px;width:148px">Chandler</div><div class="c pe" style="left:1064px;width:67px">AZ</div><div class="c blue" style="left:1131px;width:76px">85244-1030</div><div class="c blue" style="left:1207px;width:375px">Owner</div><div class="c blue last" style="left:1582px;width:124px">Renee Wiley</div></div>
<div class="row" style="top:775px"><div class="c src" style="left:0px;width:72px">100k</div><div class="c blue" style="left:72px;width:70px"><span class="cb"></span></div><div class="c blue" style="left:142px;width:80px"><div class="bar or">98.88%</div></div><div class="c blue" style="left:222px;width:70px"><div class="bar bl">98.88%</div></div><div class="c blue" style="left:292px;width:105px"><div class="bar bl">100.00%</div></div><div class="c blue" style="left:397px;width:105px"><div class="bar bl">95.53%</div></div><div class="c pe" style="left:502px;width:193px">Baskets of Cheer</div><div class="c pe" style="left:695px;width:221px">P.O. BOX 1030</div><div class="c pe" style="left:916px;width:148px">Chandler</div><div class="c pe" style="left:1064px;width:67px">AZ</div><div class="c blue" style="left:1131px;width:76px">85244-1030</div><div class="c blue" style="left:1207px;width:375px">Owner</div><div class="c blue last" style="left:1582px;width:124px">Renee Wiley</div></div>
<div class="grp" style="top:796px"><span class="garr"></span><span class="gtxt">Group ID: 392</span></div>
<div class="ind" style="top:817px"></div>
<div class="row" style="top:817px"><div class="c src" style="left:0px;width:72px">100k</div><div class="c blue" style="left:72px;width:70px"><span class="cb on"><svg width="12" height="12" viewBox="0 0 12 12"><path d="M1.8,5.6 L5,8.9 L10.6,2.8" fill="none" stroke="#fff" stroke-width="2.6"/></svg></span></div><div class="c blue" style="left:142px;width:80px"><div class="bar or">100.00%</div></div><div class="c blue" style="left:222px;width:70px"><div class="bar bl">100.00%</div></div><div class="c blue" style="left:292px;width:105px"><div class="bar bl">100.00%</div></div><div class="c blue" style="left:397px;width:105px"><div class="bar bl">100.00%</div></div><div class="c pe" style="left:502px;width:193px">Michaels &amp; Assoc</div><div class="c pe" style="left:695px;width:221px">PO Box 1360</div><div class="c pe" style="left:916px;width:148px">Chandler</div><div class="c pe" style="left:1064px;width:67px">AZ</div><div class="c blue" style="left:1131px;width:76px">85244-1360</div><div class="c blue" style="left:1207px;width:375px">Owner</div><div class="c blue last" style="left:1582px;width:124px">Kevin Michaels</div></div>
<div class="row" style="top:838px"><div class="c src" style="left:0px;width:72px">100k</div><div class="c blue" style="left:72px;width:70px"><span class="cb"></span></div><div class="c blue" style="left:142px;width:80px"><div class="bar or">98.06%</div></div><div class="c blue" style="left:222px;width:70px"><div class="bar bl">98.06%</div></div><div class="c blue" style="left:292px;width:105px"><div class="bar bl">96.73%</div></div><div class="c blue" style="left:397px;width:105px"><div class="bar bl">95.53%</div></div><div class="c pe" style="left:502px;width:193px">Michaels &amp; Assoc Inc</div><div class="c pe" style="left:695px;width:221px">P.O. BOX 1360</div><div class="c pe" style="left:916px;width:148px">Chandler</div><div class="c pe" style="left:1064px;width:67px">AZ</div><div class="c blue" style="left:1131px;width:76px">85244-1360</div><div class="c blue" style="left:1207px;width:375px">President</div><div class="c blue last" style="left:1582px;width:124px">Kevin Michaels</div></div>
<div class="grp" style="top:859px"><span class="garr"></span><span class="gtxt">Group ID: 393</span></div>
<div class="ind" style="top:880px"></div>
<div class="row" style="top:880px"><div class="c src" style="left:0px;width:72px">100k</div><div class="c blue" style="left:72px;width:70px"><span class="cb on"><svg width="12" height="12" viewBox="0 0 12 12"><path d="M1.8,5.6 L5,8.9 L10.6,2.8" fill="none" stroke="#fff" stroke-width="2.6"/></svg></span></div><div class="c blue" style="left:142px;width:80px"><div class="bar or">100.00%</div></div><div class="c blue" style="left:222px;width:70px"><div class="bar bl">100.00%</div></div><div class="c blue" style="left:292px;width:105px"><div class="bar bl">100.00%</div></div><div class="c blue" style="left:397px;width:105px"><div class="bar bl">100.00%</div></div><div class="c pe" style="left:502px;width:193px">Grand Canyon Medical</div><div class="c pe" style="left:695px;width:221px">PO Box 9218</div><div class="c pe" style="left:916px;width:148px">Scottsdale</div><div class="c pe" style="left:1064px;width:67px">AZ</div><div class="c blue" style="left:1131px;width:76px">85252-9218</div><div class="c blue" style="left:1207px;width:375px">Manager</div><div class="c blue last" style="left:1582px;width:124px">Glenn Pickard</div></div>
<div class="row" style="top:901px"><div class="c src" style="left:0px;width:72px">100k</div><div class="c blue" style="left:72px;width:70px"><span class="cb"></span></div><div class="c blue" style="left:142px;width:80px"><div class="bar or">97.94%</div></div><div class="c blue" style="left:222px;width:70px"><div class="bar bl">97.94%</div></div><div class="c blue" style="left:292px;width:105px"><div class="bar bl">96.23%</div></div><div class="c blue" style="left:397px;width:105px"><div class="bar bl">95.53%</div></div><div class="c pe" style="left:502px;width:193px">Grand Canyon Medical Entps</div><div class="c pe" style="left:695px;width:221px">P.O. BOX 9218</div><div class="c pe" style="left:916px;width:148px">Scottsdale</div><div class="c pe" style="left:1064px;width:67px">AZ</div><div class="c blue" style="left:1131px;width:76px">85252-9218</div><div class="c blue" style="left:1207px;width:375px">President</div><div class="c blue last" style="left:1582px;width:124px">Glenn Pickard</div></div>
<div class="grp" style="top:922px"><span class="garr"></span><span class="gtxt">Group ID: 394</span></div>
<div class="ind" style="top:943px"></div>
<div class="row" style="top:943px"><div class="c src" style="left:0px;width:72px">100k</div><div class="c blue" style="left:72px;width:70px"><span class="cb"></span></div><div class="c blue" style="left:142px;width:80px"><div class="bar or">100.00%</div></div><div class="c blue" style="left:222px;width:70px"><div class="bar bl">100.00%</div></div><div class="c blue" style="left:292px;width:105px"><div class="bar bl">100.00%</div></div><div class="c blue" style="left:397px;width:105px"><div class="bar bl">100.00%</div></div><div class="c pe" style="left:502px;width:193px">American Medical Products</div><div class="c pe" style="left:695px;width:221px">PO Box 60035</div><div class="c pe" style="left:916px;width:148px">Phoenix</div><div class="c pe" style="left:1064px;width:67px">AZ</div><div class="c blue" style="left:1131px;width:76px">85082-0035</div><div class="c blue" style="left:1207px;width:375px"></div><div class="c blue last" style="left:1582px;width:124px"></div></div>
<div class="row" style="top:964px"><div class="c src" style="left:0px;width:72px">100k</div><div class="c blue" style="left:72px;width:70px"><span class="cb on"><svg width="12" height="12" viewBox="0 0 12 12"><path d="M1.8,5.6 L5,8.9 L10.6,2.8" fill="none" stroke="#fff" stroke-width="2.6"/></svg></span></div><div class="c blue" style="left:142px;width:80px"><div class="bar or">98.40%</div></div><div class="c blue" style="left:222px;width:70px"><div class="bar bl">98.40%</div></div><div class="c blue" style="left:292px;width:105px"><div class="bar bl">97.75%</div></div><div class="c blue" style="left:397px;width:105px"><div class="bar bl">95.85%</div></div><div class="c pe" style="left:502px;width:193px">American Medical Products Inc</div><div class="c pe" style="left:695px;width:221px">P.O. BOX 60035</div><div class="c pe" style="left:916px;width:148px">Phoenix</div><div class="c pe" style="left:1064px;width:67px">AZ</div><div class="c blue" style="left:1131px;width:76px">85082-0035</div><div class="c blue" style="left:1207px;width:375px">President</div><div class="c blue last" style="left:1582px;width:124px">John Gilbert</div></div>
 </div>
</div>
<!-- vertical scrollbar -->
<div class="a" style="left:1902px;top:230px;width:13px;height:754px;background:#f6f6f8"></div>
<svg class="a" style="left:1906px;top:235px" width="9" height="6" viewBox="0 0 9 6"><path d="M0.8,5 h7 l-3.5,-4z" fill="#777"/></svg>
<div class="a" style="left:1907px;top:368px;width:7px;height:17px;border:1px solid #9a9a9e;border-radius:4px;background:linear-gradient(90deg,#e6e6e8,#d0d0d4)"></div>
<svg class="a" style="left:1906px;top:973px" width="9" height="6" viewBox="0 0 9 6"><path d="M0.8,1 h7 l-3.5,4z" fill="#777"/></svg>
<div id="footer" class="a"></div>
<div class="a" style="left:176px;top:987px;width:91px;height:25px;background:#fff;border:1px solid #d4d4d6;font-size:11.6px;padding:5px 0 0 25px;color:#222">Count=4752</div>
<div class="a" style="left:159px;top:1014px;width:1756px;height:16px;background:#f3f3f5"></div>
<svg class="a" style="left:163px;top:1019px" width="7" height="8" viewBox="0 0 7 8"><path d="M6,0.5 v7 l-5,-3.5z" fill="#777"/></svg>
<div class="a" style="left:176px;top:1019px;width:1715px;height:7px;border:1px solid #a9a9ad;border-radius:4px;background:linear-gradient(#e4e4e6,#cfcfd3)"></div>
<svg class="a" style="left:1907px;top:1019px" width="7" height="8" viewBox="0 0 7 8"><path d="M1,0.5 v7 l5,-3.5z" fill="#777"/></svg>
</body></html>
